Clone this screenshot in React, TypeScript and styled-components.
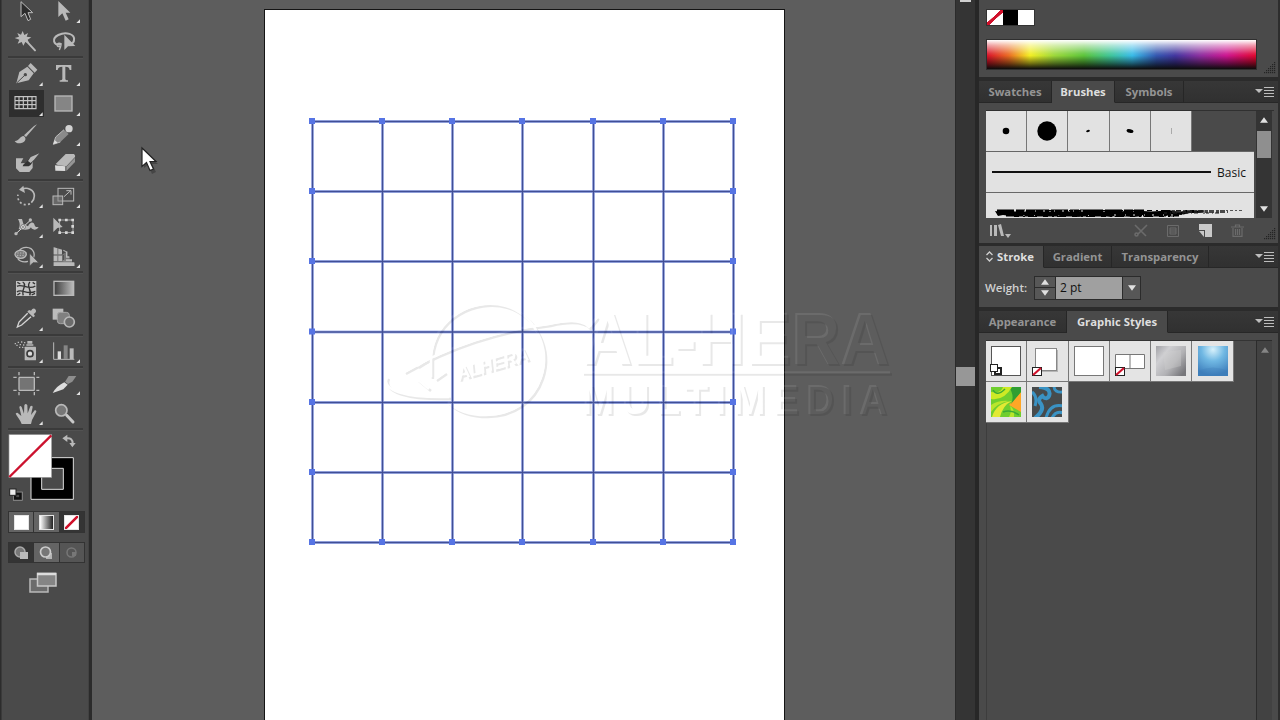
import React from "react";
import styled, { createGlobalStyle } from "styled-components";

const GlobalStyle = createGlobalStyle`
  body { margin: 0; overflow: hidden; background: #5d5d5d; }
  * { box-sizing: border-box; }
  svg { display: block; }
`;

const sans = `"Open Sans", "Noto Sans", sans-serif`;

/* ---------- frame ---------- */

const Window = styled.div`
  position: relative;
  display: flex;
  width: 1280px;
  height: 720px;
  overflow: hidden;
  background: #5d5d5d;
  font-family: ${sans};
`;

const Toolbar = styled.aside`
  flex: none;
  width: 92px;
  height: 720px;
  overflow: hidden;
  background: #4a4a4a;
  border-left: 1px solid #2c2c2c;
  border-right: 3px solid #2b2b2b;
  box-shadow: inset 1px 0 #3a3a3a, inset -1px 0 #424242;
  padding: 0 6px;
`;

const ToolGroup = styled.div`
  display: grid;
  grid-template-columns: 38px 38px;
  grid-auto-rows: 30px;
`;

const FirstGroup = styled(ToolGroup)`
  margin-top: -4px;
`;

const Separator = styled.div<{ $h: number }>`
  height: ${(p) => p.$h}px;
  display: flex;
  align-items: center;
  &::before {
    content: "";
    width: 75px;
    height: 2px;
    margin-left: 1px;
    background: #3a3a3a;
    border-bottom: 1px solid #525252;
  }
`;

const ToolCell = styled.div<{ $selected?: boolean }>`
  width: 38px;
  height: 30px;
  background: ${(p) => (p.$selected ? "#2e2e2e" : "transparent")};
  background-clip: padding-box;
  border: solid transparent;
  border-width: ${(p) => (p.$selected ? "1px 1px 2px 2px" : "0")};
  svg { margin: ${(p) => (p.$selected ? "-1px 0 0 -2px" : "0")}; }
`;

const c = "#b9b9b9";
const dark = "#4a4a4a";

type Tool = { y: number; col: 0 | 1; art: React.ReactNode; menu?: boolean; selected?: boolean };

function ToolButton({ tool }: { tool: Tool }) {
  const x = tool.col ? 135 : 21;
  const tx = x + 107 - (tool.col ? 2 : 0);
  const ty = tool.y + 70;
  return (
    <ToolCell $selected={tool.selected}>
      <svg width="38" height="30" viewBox={`${x} ${tool.y} 114 90`}>
        {tool.art}
        {tool.menu && <path d={`M${tx} ${ty}v11h-11z`} fill="#e2e2e2" />}
      </svg>
    </ToolCell>
  );
}

const selection: Tool[] = [
  { y: -12, col: 0, art: <path d="M63 5V50L75 40L84 62L92 58L84 38H98Z" fill="#2c2c2c" stroke="#bdbdbd" strokeWidth="3" /> },
  { y: -12, col: 1, menu: true, art: <path d="M175 3V51L187 40L197 62L206 58L197 38H211Z" fill={c} /> },
  {
    y: 78, col: 0,
    art: (
      <g fill={c}>
        <path d="M68 93L73 105L84 99L80 110L94 112L83 119L88 131L76 126L70 137L65 126L53 131L58 119L44 114L57 110L52 99L63 104Z" />
        <path d="M80 124L105 151" stroke={c} strokeWidth="6" strokeLinecap="round" />
      </g>
    ),
  },
  {
    y: 78, col: 1,
    art: (
      <g fill="none" stroke={c} strokeWidth="6">
        <path d="M185 134C158 138 155 115 175 105C198 94 225 102 222 120C222 126 218 130 212 132" />
        <path d="M185 132C172 125 167 138 176 140C184 141 184 133 178 150" strokeWidth="4" />
        <path d="M193 104V150L204 139L226 138Z" fill={c} stroke="none" />
      </g>
    ),
  },
];

const drawing: Tool[] = [
  {
    y: 177, col: 0, menu: true,
    art: (
      <g fill={c}>
        <path d="M49 250L58 216L82 200L101 220L86 241Z" />
        <path d="M84 198L92 189L112 209L104 218Z" />
        <path d="M51 248L75 225" stroke={dark} strokeWidth="3" />
        <circle cx="76" cy="224" r="5" fill={dark} />
      </g>
    ),
  },
  {
    y: 177, col: 1, menu: true,
    art: <path fill={c} d="M168 195H214V210H209C208 203 205 200 196 200V236C196 240 199 241 204 241V245H179V241C184 241 187 240 187 236V200C178 200 174 203 173 210H168Z" />,
  },
  {
    y: 267, col: 0, menu: true, selected: true,
    art: (
      <path d="M45 290H108V326H45ZM45 302H108M45 314H108M57 290V326M70 290V326M83 290V326M96 290V326" fill="none" stroke="#c4c4c4" strokeWidth="3.4" />
    ),
  },
  { y: 267, col: 1, menu: true, art: <rect x="165" y="288" width="51" height="45" fill="#858585" stroke={c} strokeWidth="4" /> },
  {
    y: 357, col: 0,
    art: (
      <g fill={c}>
        <path d="M111 373L78 411L72 406L102 378Z" />
        <path d="M71 408C80 413 78 426 64 429C56 431 48 430 44 423C57 424 58 409 71 408Z" />
      </g>
    ),
  },
  {
    y: 357, col: 1, menu: true,
    art: (
      <g>
        <path d="M192 389L206 402L181 426L160 433L167 411Z" fill="#8a8a8a" />
        <path d="M192 389L167 411L160 433L181 426" fill="none" stroke={c} strokeWidth="3" />
        <path d="M160 433L164 420L173 428Z" fill="#dedede" />
        <circle cx="207" cy="386" r="11" fill="#d2d2d2" />
      </g>
    ),
  },
  {
    y: 12, col: 0,
    art: (
      <g>
        <path d="M48 40H70L62 55L86 54L98 48V69L88 81H59L48 70Z" fill={c} />
        <path d="M117 25L92 35L80 50C74 56 68 58 68 64L86 64C94 60 95 55 99 48Z" fill="#333" />
        <path d="M118 25L92 36L84 48L92 54L102 44Z" fill={c} />
      </g>
    ),
  },
  {
    y: 12, col: 1, menu: true,
    art: (
      <g fill={c}>
        <path d="M197 27H222Q227 31 225 36L199 64L175 61L167 57Z" />
        <path d="M165 61L196 64V78L166 77Z" fill="#dadada" />
        <path d="M199 65L225 38V51L199 78Z" fill="#949494" />
      </g>
    ),
  },
];

const transform: Tool[] = [
  {
    y: 108, col: 0, menu: true,
    art: (
      <g fill="none" stroke={c} strokeWidth="5">
        <path d="M66 133C80 125 103 133 103 153C103 162 98 169 94 173" />
        <path d="M90 176C70 185 50 171 54 149" strokeDasharray="6 7" />
        <path d="M57 134L70 122L75 144Z" fill={c} stroke="none" />
      </g>
    ),
  },
  {
    y: 108, col: 1, menu: true,
    art: (
      <g fill="none" stroke={c} strokeWidth="3">
        <rect x="174" y="130" width="47" height="38" />
        <rect x="159" y="153" width="29" height="26" fill="#858585" fillOpacity=".5" />
        <path d="M192 155L212 137M199 137H213V149" />
      </g>
    ),
  },
  {
    y: 198, col: 0, menu: true,
    art: (
      <g fill={c}>
        <path d="M54 222H66L70 236L84 244C92 226 103 232 104 241C105 247 110 246 116 247C108 259 93 253 93 247C85 260 64 252 56 252C62 239 58 230 54 222Z" />
        <path d="M47 267L92 225" stroke="#d8d8d8" strokeWidth="3" />
        <circle cx="69" cy="246" r="7" fill="#eee" stroke={dark} strokeWidth="2" />
        <circle cx="69" cy="246" r="2.5" fill="#333" />
        <circle cx="48" cy="266" r="5" /><circle cx="91" cy="225" r="5" />
      </g>
    ),
  },
  {
    y: 198, col: 1,
    art: (
      <g fill={c}>
        <rect x="179" y="225" width="40" height="38" fill="none" stroke={c} strokeWidth="2.5" />
        <path d="M175 221h8v8h-8zM195 221h8v8h-8zM214 221h8v8h-8zM214 240h8v8h-8zM214 259h8v8h-8zM195 259h8v8h-8zM175 259h8v8h-8z" fill="#d6d6d6" />
        <path d="M160 218V261L172 249L188 246Z" />
      </g>
    ),
  },
  {
    y: 288, col: 0, menu: true,
    art: (
      <g fill="none" stroke={c} strokeWidth="4">
        <path d="M58 317C66 304 93 302 101 321C105 333 100 342 92 345M53 340C60 350 72 352 84 349" />
        <ellipse cx="62" cy="328" rx="17" ry="12" fill="#797979" />
        <path d="M52 324H80M51 331H78" strokeWidth="3" strokeDasharray="4 4" />
        <path d="M89 325V363L99 353L116 353Z" fill={c} stroke={dark} strokeWidth="2" />
      </g>
    ),
  },
  {
    y: 288, col: 1, menu: true,
    art: (
      <g fill={c}>
        <path d="M161 307L185 313V330L202 318V336H209V345H216V354H224V363H161Z" fill="#747474" />
        <path d="M161 307L172 310V328H161ZM175 311L186 314V328H175ZM161 332H172V348H161ZM175 332H186V348H175ZM161 352H223V363H161Z" />
        <path d="M190 314L202 320V334H208V338H198V321L190 318ZM190 343H216V349H190Z" />
        <path d="M190 330V345H198" fill="none" stroke={dark} strokeWidth="3" />
      </g>
    ),
  },
];

const paint: Tool[] = [
  {
    y: 12, col: 0,
    art: (
      <g>
        <rect x="48" y="33" width="61" height="45" fill="#c3c3c3" />
        <g fill="none" stroke="#333" strokeWidth="4">
          <path d="M51 49C65 39 86 62 106 48M51 66C63 53 82 77 106 64M68 36C84 44 62 60 70 76M90 36C76 49 98 60 89 76" />
          <path d="M52 37L61 42M98 37L105 42M52 75L61 69M95 75L105 70" />
        </g>
      </g>
    ),
  },
  {
    y: 12, col: 1,
    art: (
      <g>
        <defs><linearGradient id="toolGrad"><stop offset="0" stopColor="#3c3c3c" /><stop offset="1" stopColor="#bdbdbd" /></linearGradient></defs>
        <rect x="162" y="34" width="59" height="42" fill="url(#toolGrad)" stroke={c} strokeWidth="4" />
      </g>
    ),
  },
  {
    y: 102, col: 0, menu: true,
    art: (
      <g fill={c}>
        <path d="M93 122Q100 111 107 119Q111 126 101 132L105 138L100 142L82 125L87 120Z" />
        <path d="M83 130L57 156L52 171L65 165L93 140" fill="#4d4d4d" stroke="#d4d4d4" strokeWidth="4" />
      </g>
    ),
  },
  {
    y: 102, col: 1,
    art: (
      <g>
        <rect x="158" y="116" width="32" height="33" fill="#bcbcbc" />
        <rect x="172" y="127" width="36" height="34" rx="9" fill="#808080" stroke="#a5a5a5" strokeWidth="3" />
        <circle cx="208" cy="156" r="15" fill="#6c6c6c" stroke="#b8b8b8" strokeWidth="5" />
      </g>
    ),
  },
];

const symbols: Tool[] = [
  {
    y: 198, col: 0, menu: true,
    art: (
      <g fill={c}>
        <path d="M82 213h15v8h-15zM79 223h21v4h-21z" />
        <rect x="74" y="230" width="34" height="41" rx="2" />
        <circle cx="90" cy="251" r="9" fill="#ddd" stroke="#3b3b3b" strokeWidth="5" />
        <path d="M44 219h4v4h-4zM53 215h4v4h-4zM63 214h4v4h-4zM72 216h4v4h-4zM49 224h4v4h-4zM59 222h4v4h-4zM69 223h4v4h-4zM57 230h4v4h-4zM66 230h4v4h-4z" />
      </g>
    ),
  },
  {
    y: 198, col: 1, menu: true,
    art: (
      <g fill={c}>
        <path d="M161 217V268H223" fill="none" stroke={c} strokeWidth="3" />
        <path d="M173 244h10v23h-10z" fill="#ddd" />
        <path d="M191 226h12v41h-12z" fill="#858585" />
        <path d="M209 235h12v32h-12z" />
      </g>
    ),
  },
];

const slicing: Tool[] = [
  {
    y: 294, col: 0,
    art: (
      <g>
        <rect x="57" y="323" width="45" height="37" fill="#747474" />
        <path d="M40 322H50M56 322H104M109 322H118M40 361H50M56 361H104M109 361H118M57 306V316M57 323V359M57 366V376M103 306V316M103 323V359M103 366V376" stroke={c} strokeWidth="4" />
      </g>
    ),
  },
  {
    y: 294, col: 1, menu: true,
    art: (
      <g>
        <path d="M206 318H229L217 335L204 342L195 335Z" fill="#8e8e8e" />
        <path d="M193 337L203 344L190 358L158 369Q171 347 193 337Z" fill="#dedede" />
      </g>
    ),
  },
  {
    y: 384, col: 0, menu: true,
    art: (
      <path fill={c} d="M65 462C61 449 50 438 47 431Q51 426 56 431L64 438L58 412Q60 405 65 411L72 431L73 406Q77 398 82 406L83 430L91 409Q97 404 98 411L93 435L104 421Q110 419 109 425L96 450L93 462Z" />
    ),
  },
  {
    y: 384, col: 1,
    art: (
      <g>
        <path d="M200 436L219 456" stroke="#c8c8c8" strokeWidth="9" strokeLinecap="round" />
        <circle cx="184" cy="421" r="17" fill="#777" stroke={c} strokeWidth="5" />
      </g>
    ),
  },
];

/* ---------- fill / stroke controls ---------- */

const FillStroke = styled.div`
  height: 81px;
  margin-left: -1px;
`;

const ModeRow = styled.div<{ $h: number }>`
  display: flex;
  width: 77px;
  height: ${(p) => p.$h}px;
  margin: 0 0 9px 1px;
  border: 1px solid #333;
  background: #333;
  gap: 1px;
`;

const ModeButton = styled.div<{ $on?: boolean; $off?: boolean }>`
  flex: 1;
  display: flex;
  align-items: center;
  justify-content: center;
  background: ${(p) => (p.$on ? "#343434" : p.$off ? "#555" : "#646464")};
`;

const ModeSwatch = styled.div<{ $bg: string }>`
  width: 15px;
  height: 15px;
  border: 1px solid #e5e5e5;
  background: ${(p) => p.$bg};
`;

const ScreenMode = styled.div`
  margin: 9px 0 0 22px;
`;

const slash = "linear-gradient(to top left, #fff 0 42%, #d0112b 43% 57%, #fff 58%)";

/* ---------- canvas ---------- */

const Canvas = styled.main`
  flex: 1;
  display: flex;
  justify-content: flex-start;
  padding: 9px 0 0 172px;
  background: #5d5d5d;
`;

const Artboard = styled.div`
  width: 521px;
  height: 720px;
  padding: 104px 0 0 40px;
  border: 1px solid #141414;
  background: #fff;
`;

const columns = [7, 77, 147, 217, 288, 358, 428];
const rows = [7, 77, 147, 217.5, 288, 358, 428];

function GridArt() {
  return (
    <svg width="436" height="436" viewBox="0 0 436 436">
      {["#a9b7ee", "#414f96"].map((color, i) => (
        <g key={color} stroke={color} strokeWidth={i ? 1.4 : 2.8}>
          {columns.map((x) => <path key={x} d={`M${x + 0.5} 7V428`} />)}
          {rows.map((y) => <path key={y} d={`M7 ${y + 0.5}H428`} />)}
        </g>
      ))}
      <g fill="#5674e4">
        {columns.map((x) => [7, 428].map((y) => <rect key={`${x}-${y}`} x={x - 3} y={y - 3} width="6" height="6" />))}
        {rows.slice(1, 6).map((y) => [7, 428].map((x) => <rect key={`${x}-${y}`} x={x - 3} y={y - 3} width="6" height="6" />))}
      </g>
    </svg>
  );
}

const Watermark = styled.svg`
  position: absolute;
  left: 380px;
  top: 295px;
  pointer-events: none;
`;

function WatermarkArt() {
  return (
    <Watermark width="530" height="130" viewBox="380 295 530 130">
      <defs>
        <filter id="emboss" x="-2%" y="-5%" width="104%" height="110%" colorInterpolationFilters="sRGB">
          <feGaussianBlur in="SourceAlpha" stdDeviation=".5" result="shape" />
          <feOffset in="shape" dx="1.4" dy="1.4" result="low" />
          <feOffset in="shape" dx="-1.4" dy="-1.4" result="high" />
          <feComposite in="low" in2="high" operator="out" result="lowEdge" />
          <feComposite in="high" in2="low" operator="out" result="highEdge" />
          <feFlood floodColor="#000" floodOpacity=".09" />
          <feComposite in2="lowEdge" operator="in" result="shade" />
          <feFlood floodColor="#fff" floodOpacity=".09" />
          <feComposite in2="highEdge" operator="in" result="light" />
          <feMerge><feMergeNode in="shade" /><feMergeNode in="light" /></feMerge>
        </filter>
      </defs>
      <g filter="url(#emboss)" fontFamily="Liberation Sans, sans-serif" fontWeight="700">
        <text x="584" y="365" fontSize="74" textLength="306" lengthAdjust="spacingAndGlyphs">AL-HERA</text>
        <text x="583" y="415" fontSize="43" textLength="312" lengthAdjust="spacingAndGlyphs" letterSpacing="8">MULTIMEDIA</text>
        <text x="460" y="381" transform="rotate(-16 460 381)" fontStyle="italic" fontSize="19" textLength="74" lengthAdjust="spacingAndGlyphs">ALHERA</text>
        <g fill="none" stroke="#000" strokeWidth="2.5">
          <path d="M583 373.500H891" />
          <path d="M432 357C436 318 474 298 507 307C536 316 552 349 542 378C534 402 512 416 487 416C472 416 459 413 449 403" />
          <path d="M405 373C450 347 500 331 550 325Q580 318 590 328L598 318" />
          <path d="M388 378C382 391 405 399 450 398M418 367L432 358V378M418 380L430 390M436 380L446 373" />
        </g>
      </g>
    </Watermark>
  );
}

const Cursor = styled.svg`
  position: absolute;
  left: 138px;
  top: 145px;
`;

const CanvasScroll = styled.div`
  flex: none;
  display: flex;
  flex-direction: column;
  justify-content: space-between;
  width: 20px;
  height: 720px;
  padding-bottom: 334px;
  background: #343434;
  border-left: 1px solid #2b2b2b;
`;

const ScrollThumb = styled.div<{ $h: number }>`
  height: ${(p) => p.$h}px;
  background: ${(p) => (p.$h > 10 ? "#979797" : "#d0d0d0")};
  width: ${(p) => (p.$h > 10 ? 19 : 11)}px;
  margin-left: ${(p) => (p.$h > 10 ? 0 : 4)}px;
`;

/* ---------- panels ---------- */

const Dock = styled.aside`
  flex: none;
  width: 305px;
  height: 720px;
  display: flex;
  flex-direction: column;
  background: #4a4a4a;
  border-left: 4px solid #272727;
  border-right: 2px solid #2d2d2d;
`;

const PanelBody = styled.section<{ $h: number }>`
  position: relative;
  flex: none;
  height: ${(p) => p.$h}px;
  padding-left: 7px;
  background: #4a4a4a;
`;

const Divider = styled.div<{ $h: number }>`
  flex: none;
  height: ${(p) => p.$h}px;
  background: #2b2b2b;
`;

const TabBar = styled.div<{ $h: number }>`
  flex: none;
  display: flex;
  height: ${(p) => p.$h}px;
  background: linear-gradient(#373737, #303030);
`;

const Tab = styled.div<{ $active?: boolean; $w: number }>`
  display: flex;
  align-items: center;
  justify-content: center;
  gap: 2px;
  width: ${(p) => p.$w}px;
  border-right: 1px solid #262626;
  border-bottom: 1px solid ${(p) => (p.$active ? "#4a4a4a" : "#272727")};
  background: ${(p) => (p.$active ? "#4a4a4a" : "transparent")};
  color: ${(p) => (p.$active ? "#dedede" : "#949494")};
  font-weight: 700;
  font-size: 11.3px;
  line-height: 1;
  white-space: nowrap;
`;

const TabFill = styled.div`
  flex: 1;
  display: flex;
  align-items: center;
  justify-content: flex-end;
  padding-right: 4px;
  border-bottom: 1px solid #272727;
`;

const MenuIcon = () => (
  <svg width="19" height="11" viewBox="0 0 19 11" fill="#bdbdbd">
    <path d="M0 3h8L4 7zM9 1h10v1H9zM9 4h10v1H9zM9 7h10v1H9zM9 10h10v1H9z" />
  </svg>
);

const Label = styled.span<{ $w: number }>`
  display: flex;
  justify-content: center;
  width: ${(p) => p.$w}px;
`;

function Tabs({ tabs, active, height, sort }: { tabs: [string, number, number][]; active: number; height: number; sort?: boolean }) {
  return (
    <TabBar $h={height}>
      {tabs.map(([label, w, textWidth], i) => (
        <Tab key={label} $w={w} $active={i === active}>
          {sort && i === active && (
            <svg width="7" height="11" viewBox="0 0 7 11" fill="none" stroke="#cfcfcf" strokeWidth="1.3"><path d="M.5 4L3.5 1L6.5 4M.5 7L3.5 10L6.5 7" /></svg>
          )}
          <Label $w={textWidth}>{label}</Label>
        </Tab>
      ))}
      <TabFill><MenuIcon /></TabFill>
    </TabBar>
  );
}

const QuickColors = styled.div`
  display: flex;
  width: 49px;
  height: 17px;
  margin-bottom: 13px;
  border: 1px solid #333;
  background: #333;
`;

const QuickColor = styled.div<{ $bg: string }>`
  flex: 1;
  background: ${(p) => p.$bg};
`;

const ColorBody = styled(PanelBody)`
  padding-top: 9px;
`;

const Spectrum = styled.div`
  width: 271px;
  height: 31px;
  border: 1px solid #2f2f2f;
  background:
    linear-gradient(#fff 0%, rgba(255,255,255,.6) 18%, rgba(255,255,255,.1) 46%, rgba(0,0,0,0) 54%, rgba(0,0,0,.5) 80%, #0c0c0c 100%),
    linear-gradient(90deg, #d8122a 0%, #ea6a22 8%, #f3ee22 16%, #9cd83a 25%, #5cc43a 36%, #3fc59a 46%, #38bbe8 54%, #3457b0 63%, #43369f 70%, #8b2f9f 79%, #cc1590 89%, #e0082f 100%);
`;

const Grip = styled.svg`
  position: absolute;
  right: 2px;
  bottom: 3px;
`;

const GripIcon = () => (
  <Grip width="12" height="12" viewBox="0 0 12 12" fill="#242424">
    {[0, 1, 2, 3, 4, 5].map((r) =>
      Array.from({ length: r + 1 }, (_, k) => <rect key={`${r}-${k}`} x={10 - k * 2} y={r * 2} width="1.2" height="1.2" />)
    )}
  </Grip>
);

const BrushesBody = styled(PanelBody)`
  padding-top: 7px;
`;

const BrushArea = styled.div`
  display: flex;
  width: 288px;
  height: 108px;
  border-top: 1px solid #303030;
`;

const BrushList = styled.div`
  flex: none;
  width: 268px;
  height: 107px;
  overflow: hidden;
`;

const BrushCells = styled.div`
  display: flex;
  height: 41px;
  border-bottom: 1px solid #666;
`;

const BrushCell = styled.div`
  width: 41.2px;
  height: 40px;
  display: flex;
  align-items: center;
  justify-content: center;
  background: #e2e2e2;
  border-right: 1px solid #777;
`;

const BrushRow = styled.div`
  display: flex;
  align-items: center;
  justify-content: space-between;
  height: 41px;
  padding: 0 8px 0 6px;
  border-bottom: 1px solid #686868;
  background: #e2e2e2;
  color: #151515;
  font: 400 12px ${sans};
  &::before {
    content: "";
    width: 219px;
    height: 2px;
    background: #111;
  }
`;

const CharcoalRow = styled.div`
  height: 26px;
  padding: 15px 0 0 8px;
  background: #e2e2e2;
`;

const ScrollTrack = styled.div<{ $h: number }>`
  display: flex;
  flex-direction: column;
  align-items: center;
  width: 16px;
  height: ${(p) => p.$h}px;
  margin-left: 2px;
  padding: 6px 0;
  background: #343434;
`;

const TrackThumb = styled.div`
  width: 14px;
  height: 27px;
  margin: 8px 0 auto;
  background: #8f8f8f;
`;

const Arrow = ({ down, dim }: { down?: boolean; dim?: boolean }) => (
  <svg width="8" height="6" viewBox="0 0 9 6"><path d={down ? "M0 0H9L4.5 6Z" : "M0 6H9L4.5 0Z"} fill={dim ? "#858585" : "#e0e0e0"} /></svg>
);

const BrushFooter = styled.div`
  display: flex;
  align-items: center;
  justify-content: space-between;
  width: 258px;
  height: 25px;
  padding-left: 3px;
`;

const FooterActions = styled.div`
  display: flex;
  align-items: center;
  gap: 19px;
`;

const StrokeBody = styled(PanelBody)`
  display: flex;
  align-items: center;
  padding-left: 6px;
`;

const WeightLabel = styled.span`
  width: 49px;
  color: #d0d0d0;
  font: 600 11.5px ${sans};
`;

const Stepper = styled.div`
  display: flex;
  width: 107px;
  height: 24px;
  border: 1px solid #2b2b2b;
  background: #2b2b2b;
  gap: 1px;
`;

const StepButtons = styled.div`
  display: flex;
  flex-direction: column;
  gap: 1px;
  width: 20px;
`;

const StepButton = styled.div`
  flex: 1;
  display: flex;
  align-items: center;
  justify-content: center;
  background: #575757;
`;

const StepValue = styled.div`
  width: 66px;
  padding-left: 4px;
  background: #a0a0a0;
  color: #111;
  font: 400 12px/22px ${sans};
`;

const StylesBody = styled(PanelBody)`
  display: flex;
  padding-top: 7px;
`;

const StyleGrid = styled.div`
  flex: none;
  display: grid;
  grid-template-columns: repeat(6, 41.3px);
  grid-auto-rows: 41px;
  align-content: start;
  width: 270px;
  border-top: 1px solid #343434;
  box-shadow: inset 1px 0 #3d3d3d;
`;

const StyleCell = styled.div`
  display: flex;
  align-items: center;
  justify-content: center;
  background: #e4e4e4;
  border-right: 1px solid #777;
  border-bottom: 1px solid #777;
`;

const StyleTrack = styled(ScrollTrack)`
  margin-left: 0;
  border-top: 1px solid #2c2c2c;
  border-left: 1px solid #2c2c2c;
  background: #424242;
`;

const NoneMark = ({ x = 0 }: { x?: number }) => (
  <g><rect x={x + 0.5} y="21.5" width="9" height="8" fill="#fff" stroke="#222" /><path d={`M${x + 1} 29L${x + 9} 22`} stroke="#d0112b" strokeWidth="2.2" /></g>
);

const styleArt: React.ReactNode[] = [
  <g><rect x=".5" y=".5" width="29" height="29" fill="#fff" stroke="#555" /><rect x="4" y="22" width="6" height="6" fill="none" stroke="#222" strokeWidth="2" /><rect x="-.5" y="18.5" width="7" height="7" fill="#fff" stroke="#222" /></g>,
  <g><rect x="5" y="4" width="21" height="22" fill="#b5b5b5" /><rect x="3.5" y="2.5" width="21" height="22" fill="#fff" stroke="#888" /><NoneMark /></g>,
  <rect x=".5" y=".5" width="29" height="29" fill="#fff" stroke="#777" />,
  <g><path d="M.5 8.500H29.500V22.500H.5ZM15 8.500V22.500" fill="#fff" stroke="#777" /><NoneMark /></g>,
  <g>
    <defs><linearGradient id="silver" x2="1" y2=".8"><stop stopColor="#a2a2a6" /><stop offset=".3" stopColor="#cfcfd2" /><stop offset=".65" stopColor="#b2b2b5" /><stop offset="1" stopColor="#77777b" /></linearGradient></defs>
    <rect width="30" height="30" fill="url(#silver)" /><path d="M7 6L25 4V20L9 24Z" fill="#d0d0d2" opacity=".35" />
  </g>,
  <g>
    <defs><radialGradient id="sky" cx=".5" cy=".12" r=".85"><stop stopColor="#d7f1fb" /><stop offset=".45" stopColor="#70b8e3" /><stop offset="1" stopColor="#3f80bd" /></radialGradient></defs>
    <rect width="30" height="30" fill="url(#sky)" /><path d="M0 25Q15 18 30 25V30H0Z" fill="#3d78b5" opacity=".25" />
  </g>,
  <g>
    <rect width="30" height="30" fill="#6fce2e" />
    <path d="M30 5V25L18 18Z" fill="#ffa726" /><path d="M18 0H30V5L20 17Q24 9 18 0Z" fill="#2f9e32" />
    <path d="M0 12Q13 14 21 0H12Q10 7 0 5Z" fill="#cdea25" /><path d="M1 30Q5 16 21 14Q12 18 9 30Z" fill="#e2e934" />
    <path d="M0 18Q8 13 18 14Q6 16 0 25ZM19 19Q24 22 23 30H18Q21 25 19 19Z" fill="#b9e52c" /><path d="M2 3Q6 10 14 2M12 25Q20 22 28 28" stroke="#3aa936" strokeWidth="1.5" fill="none" />
  </g>,
  <g>
    <defs><clipPath id="tile"><rect width="30" height="30" /></clipPath></defs>
    <rect width="30" height="30" fill="#474b4c" />
    <g clipPath="url(#tile)" fill="none" stroke="#3a93c4">
      <path d="M7 0Q20 1 17 9Q15 13 11 10" strokeWidth="4" />
      <path d="M12 8Q4 12 9 17Q13 23 3 31" strokeWidth="4" />
      <path d="M31 19Q18 16 14 31M31 26Q24 23 20 31M22 -1Q22 6 31 5" strokeWidth="3" />
      <path d="M0 5Q6 10 3 19" strokeWidth="3" />
    </g>
  </g>,
];

const charcoal = "M1 2L9 3L17 2L25 4L31 2L38 3L45 2L53 4L60 3L67 2L77 3L84 2L94 3L103 2L112 4L124 3L132 2L140 3L149 2L157 3L166 2L175 1L184 3L190 2L200 2L208 1L212 2L205 4L196 4L187 6L179 5L172 7L164 6L156 7L148 6L140 8L132 7L124 6L117 8L109 6L101 7L93 6L84 8L75 6L66 7L58 5L50 7L43 6L34 7L25 6L17 7L9 6L4 7Z";

/* ---------- app ---------- */

const renderGroup = (tools: Tool[]) => tools.map((t) => <ToolButton key={`${t.y}-${t.col}`} tool={t} />);

export default function App() {
  return (
    <Window>
      <GlobalStyle />
      <Toolbar>
        <FirstGroup>{renderGroup(selection)}</FirstGroup>
        <Separator $h={3} />
        <ToolGroup>{renderGroup(drawing)}</ToolGroup>
        <Separator $h={2} />
        <ToolGroup>{renderGroup(transform)}</ToolGroup>
        <Separator $h={3} />
        <ToolGroup>{renderGroup(paint)}</ToolGroup>
        <Separator $h={2} />
        <ToolGroup>{renderGroup(symbols)}</ToolGroup>
        <Separator $h={2} />
        <ToolGroup>{renderGroup(slicing)}</ToolGroup>
        <Separator $h={2} />
        <FillStroke>
          <svg width="80" height="78" viewBox="18 15 240 234">
            <path d="M93 98H220V223H93ZM125 130V193H190V130Z" fill="#000" fillRule="evenodd" stroke="#dedede" strokeWidth="3" />
            <rect x="27" y="29" width="128" height="128" fill="#fff" stroke="#999" strokeWidth="2" />
            <path d="M28 156L154 31" stroke="#cc122e" strokeWidth="7" />
            <path d="M200 40Q218 38 218 56" fill="none" stroke={c} strokeWidth="6" />
            <path d="M187 40L202 29V51ZM208 54H227L217 67Z" fill={c} />
            <rect x="45" y="206" width="16" height="14" fill="none" stroke="#111" strokeWidth="7" />
            <rect x="40" y="201" width="27" height="25" fill="none" stroke="#999" strokeWidth="2" />
            <rect x="29" y="192" width="19" height="19" fill="#eee" stroke="#222" strokeWidth="3" />
          </svg>
        </FillStroke>
        <ModeRow $h={22}>
          <ModeButton><ModeSwatch $bg="#fff" /></ModeButton>
          <ModeButton><ModeSwatch $bg="linear-gradient(90deg,#fff,#222)" /></ModeButton>
          <ModeButton $on><ModeSwatch $bg={slash} /></ModeButton>
        </ModeRow>
        <ModeRow $h={21}>
          <ModeButton $on><svg width="16" height="16" viewBox="0 0 16 16"><circle cx="7" cy="7" r="5" fill="#777" stroke="#aaa" strokeWidth="1.5" /><path d="M7 7h8v7H7z" fill="#bbb" /></svg></ModeButton>
          <ModeButton><svg width="16" height="16" viewBox="0 0 16 16"><path d="M8 8h6v6H8z" fill="#b5b5b5" /><circle cx="7.500" cy="7" r="5" fill="#777" stroke="#ccc" strokeWidth="1.7" /></svg></ModeButton>
          <ModeButton $off><svg width="16" height="16" viewBox="0 0 16 16"><circle cx="7.500" cy="7.500" r="4.500" fill="none" stroke="#777" strokeWidth="1.5" /><path d="M8 7h4v4H8z" fill="#777" /></svg></ModeButton>
        </ModeRow>
        <ScreenMode>
          <svg width="28" height="22" viewBox="0 0 28 22"><path d="M1 7H19V20H1Z" fill="#6c6c6c" stroke={c} strokeWidth="1.5" /><path d="M8.500 1.500H27V14H8.500Z" fill="#858585" stroke="#c8c8c8" strokeWidth="1.5" /><path d="M8 2H27" stroke="#ddd" strokeWidth="2.500" /></svg>
        </ScreenMode>
      </Toolbar>

      <Canvas>
        <Artboard><GridArt /></Artboard>
      </Canvas>

      <CanvasScroll>
        <ScrollThumb $h={2} />
        <ScrollThumb $h={19} />
      </CanvasScroll>

      <Dock>
        <ColorBody $h={77}>
          <QuickColors>
            <QuickColor $bg={slash} />
            <QuickColor $bg="#000" />
            <QuickColor $bg="#fff" />
          </QuickColors>
          <Spectrum />
          <GripIcon />
        </ColorBody>
        <Divider $h={4} />
        <Tabs height={22} active={1} tabs={[["Swatches", 73, 56], ["Brushes", 63, 46], ["Symbols", 69, 50]]} />
        <BrushesBody $h={140}>
          <BrushArea>
            <BrushList>
              <BrushCells>
                <BrushCell><svg width="40" height="40"><circle cx="20" cy="20" r="3.300" /></svg></BrushCell>
                <BrushCell><svg width="40" height="40"><circle cx="20" cy="20" r="9.700" /></svg></BrushCell>
                <BrushCell><svg width="40" height="40"><ellipse cx="20" cy="20" rx="1.900" ry="1.100" transform="rotate(-15 20 20)" /></svg></BrushCell>
                <BrushCell><svg width="40" height="40"><ellipse cx="20" cy="20" rx="3.500" ry="1.900" transform="rotate(12 20 20)" /></svg></BrushCell>
                <BrushCell><svg width="40" height="40"><path d="M20.500 17V23" stroke="#aaa" /></svg></BrushCell>
              </BrushCells>
              <BrushRow>Basic</BrushRow>
              <CharcoalRow>
                <svg width="255" height="11" viewBox="0 0 255 11">
                  <path d={charcoal} transform="translate(0 1)" />
                  <path d="M3 4H150M12 6H185" stroke="#000" strokeWidth="5" strokeDasharray="17 2 9 1 23 2" />
                  <path d="M8 2.500H200M20 8.500H180" stroke="#000" strokeWidth="1.200" strokeDasharray="5 4 2 3 9 6" />
                  <path d="M178 3.500H234" stroke="#222" strokeWidth="3" strokeDasharray="3 1 5 2" opacity=".8" />
                  <path d="M170 5H225" stroke="#222" strokeWidth="1.500" strokeDasharray="3 3 1 2 4 5 2 1" opacity=".7" />
                  <path d="M232 2.500H248" stroke="#555" strokeWidth="1.200" strokeDasharray="2 2 3 2" />
                  <path d="M120 7H230M30 3H90" stroke="#e2e2e2" strokeWidth="1" strokeDasharray="2 9 1 7" />
                </svg>
              </CharcoalRow>
            </BrushList>
            <ScrollTrack $h={107}><Arrow /><TrackThumb /><Arrow down /></ScrollTrack>
          </BrushArea>
          <BrushFooter>
            <svg width="23" height="14" viewBox="0 0 23 14" fill={c}><path d="M1 1h2v11H1zM5 1h3v11H5zM9 1L12 0L15 12H12ZM16 10h6l-3 4z" /></svg>
            <FooterActions>
              <svg width="14" height="13" viewBox="0 0 14 13" fill="none" stroke="#6b6b6b" strokeWidth="1.6"><path d="M1 1L12 12M13 1L4 10" /><circle cx="2.500" cy="10.500" r="1.500" /></svg>
              <svg width="12" height="12" viewBox="0 0 12 12" fill="none" stroke="#6b6b6b"><path d="M.5 .5h11v11H.5zM3 3h6v6H3zM3 5h6M3 7h6" /></svg>
              <svg width="14" height="13" viewBox="0 0 14 13"><path d="M1 0H14V13H7V6H1Z" fill="#c9c9c9" /><path d="M1 7H6V13Z" fill="#c9c9c9" /></svg>
              <svg width="13" height="13" viewBox="0 0 13 13" fill="none" stroke="#6b6b6b" strokeWidth="1.200"><path d="M0 3H13M4.500 3V1H8.500V3M2 4V12.300H11V4M4.500 5V11M6.500 5V11M8.500 5V11" /></svg>
            </FooterActions>
          </BrushFooter>
          <GripIcon />
        </BrushesBody>
        <Divider $h={3} />
        <Tabs height={22} active={0} sort tabs={[["Stroke", 65, 42], ["Gradient", 68, 52], ["Transparency", 97, 78]]} />
        <StrokeBody $h={39}>
          <WeightLabel>Weight:</WeightLabel>
          <Stepper>
            <StepButtons>
              <StepButton><Arrow /></StepButton>
              <StepButton><Arrow down /></StepButton>
            </StepButtons>
            <StepValue>2 pt</StepValue>
            <StepButton><Arrow down /></StepButton>
          </Stepper>
        </StrokeBody>
        <Divider $h={4} />
        <Tabs height={22} active={1} tabs={[["Appearance", 88, 70], ["Graphic Styles", 101, 84]]} />
        <StylesBody $h={387}>
          <StyleGrid>
            {styleArt.map((art, i) => (
              <StyleCell key={i}><svg width="30" height="30" viewBox="0 0 30 30" overflow="visible">{art}</svg></StyleCell>
            ))}
          </StyleGrid>
          <StyleTrack $h={380}><Arrow dim /></StyleTrack>
        </StylesBody>
      </Dock>

      <WatermarkArt />
      <Cursor width="24" height="32" viewBox="0 0 24 32">
        <path d="M6 5V23L10 20L14 29L18 27L14 19H20Z" fill="#000" opacity=".25" />
        <path d="M4 3V21.500L8.500 17.500L12 25.500L15.500 24L12 16.500H18Z" fill="#fff" stroke="#222" strokeWidth="1.200" />
      </Cursor>
    </Window>
  );
}
